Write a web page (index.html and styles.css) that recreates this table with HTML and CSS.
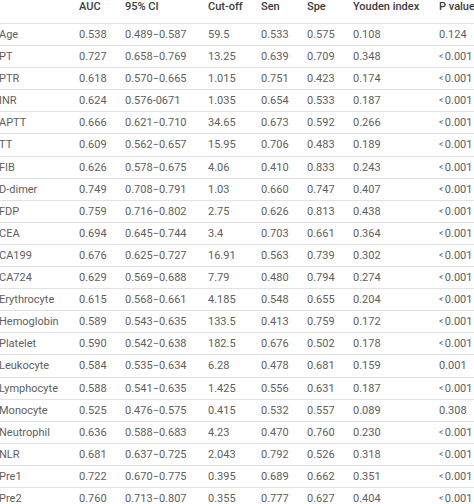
FILE: index.html
```html
<!DOCTYPE html>
<html>
<head>
<meta charset="utf-8">
<link rel="stylesheet" href="styles.css">
</head>
<body>
<div class="frame">
<div class="table">
  <div class="row head">
    <span></span><span>AUC</span><span>95% CI</span><span>Cut-off</span><span>Sen</span><span>Spe</span><span>Youden index</span><span>P value</span>
  </div>
  <div class="row"><span>Age</span><span>0.538</span><span>0.489−0.587</span><span>59.5</span><span>0.533</span><span>0.575</span><span>0.108</span><span>0.124</span></div>
  <div class="row"><span>PT</span><span>0.727</span><span>0.658−0.769</span><span>13.25</span><span>0.639</span><span>0.709</span><span>0.348</span><span><i class="lt">&lt;</i>0.001</span></div>
  <div class="row"><span>PTR</span><span>0.618</span><span>0.570−0.665</span><span>1.015</span><span>0.751</span><span>0.423</span><span>0.174</span><span><i class="lt">&lt;</i>0.001</span></div>
  <div class="row"><span>INR</span><span>0.624</span><span>0.576-0671</span><span>1.035</span><span>0.654</span><span>0.533</span><span>0.187</span><span><i class="lt">&lt;</i>0.001</span></div>
  <div class="row"><span>APTT</span><span>0.666</span><span>0.621−0.710</span><span>34.65</span><span>0.673</span><span>0.592</span><span>0.266</span><span><i class="lt">&lt;</i>0.001</span></div>
  <div class="row"><span>TT</span><span>0.609</span><span>0.562−0.657</span><span>15.95</span><span>0.706</span><span>0.483</span><span>0.189</span><span><i class="lt">&lt;</i>0.001</span></div>
  <div class="row"><span>FIB</span><span>0.626</span><span>0.578−0.675</span><span>4.06</span><span>0.410</span><span>0.833</span><span>0.243</span><span><i class="lt">&lt;</i>0.001</span></div>
  <div class="row"><span>D-dimer</span><span>0.749</span><span>0.708−0.791</span><span>1.03</span><span>0.660</span><span>0.747</span><span>0.407</span><span><i class="lt">&lt;</i>0.001</span></div>
  <div class="row"><span>FDP</span><span>0.759</span><span>0.716−0.802</span><span>2.75</span><span>0.626</span><span>0.813</span><span>0.438</span><span><i class="lt">&lt;</i>0.001</span></div>
  <div class="row"><span>CEA</span><span>0.694</span><span>0.645−0.744</span><span>3.4</span><span>0.703</span><span>0.661</span><span>0.364</span><span><i class="lt">&lt;</i>0.001</span></div>
  <div class="row"><span>CA199</span><span>0.676</span><span>0.625−0.727</span><span>16.91</span><span>0.563</span><span>0.739</span><span>0.302</span><span><i class="lt">&lt;</i>0.001</span></div>
  <div class="row"><span>CA724</span><span>0.629</span><span>0.569−0.688</span><span>7.79</span><span>0.480</span><span>0.794</span><span>0.274</span><span><i class="lt">&lt;</i>0.001</span></div>
  <div class="row"><span>Erythrocyte</span><span>0.615</span><span>0.568−0.661</span><span>4.185</span><span>0.548</span><span>0.655</span><span>0.204</span><span><i class="lt">&lt;</i>0.001</span></div>
  <div class="row"><span>Hemoglobin</span><span>0.589</span><span>0.543−0.635</span><span>133.5</span><span>0.413</span><span>0.759</span><span>0.172</span><span><i class="lt">&lt;</i>0.001</span></div>
  <div class="row"><span>Platelet</span><span>0.590</span><span>0.542−0.638</span><span>182.5</span><span>0.676</span><span>0.502</span><span>0.178</span><span><i class="lt">&lt;</i>0.001</span></div>
  <div class="row"><span>Leukocyte</span><span>0.584</span><span>0.535−0.634</span><span>6.28</span><span>0.478</span><span>0.681</span><span>0.159</span><span>0.001</span></div>
  <div class="row"><span>Lymphocyte</span><span>0.588</span><span>0.541−0.635</span><span>1.425</span><span>0.556</span><span>0.631</span><span>0.187</span><span><i class="lt">&lt;</i>0.001</span></div>
  <div class="row"><span>Monocyte</span><span>0.525</span><span>0.476−0.575</span><span>0.415</span><span>0.532</span><span>0.557</span><span>0.089</span><span>0.308</span></div>
  <div class="row"><span>Neutrophil</span><span>0.636</span><span>0.588−0.683</span><span>4.23</span><span>0.470</span><span>0.760</span><span>0.230</span><span><i class="lt">&lt;</i>0.001</span></div>
  <div class="row"><span>NLR</span><span>0.681</span><span>0.637−0.725</span><span>2.043</span><span>0.792</span><span>0.526</span><span>0.318</span><span><i class="lt">&lt;</i>0.001</span></div>
  <div class="row"><span>Pre1</span><span>0.722</span><span>0.670−0.775</span><span>0.395</span><span>0.689</span><span>0.662</span><span>0.351</span><span><i class="lt">&lt;</i>0.001</span></div>
  <div class="row"><span>Pre2</span><span>0.760</span><span>0.713−0.807</span><span>0.355</span><span>0.777</span><span>0.627</span><span>0.404</span><span><i class="lt">&lt;</i>0.001</span></div>
</div>
</div>
</body>
</html>
```

FILE: styles.css
```css
html, body {
  margin: 0;
  padding: 0;
  background: #ffffff;
  overflow: hidden;
}
body {
  width: 474px;
  height: 504px;
  font-family: Roboto, "Liberation Sans", sans-serif;
  font-size: 11px;
  color: #606060;
}
.frame {
  width: 474px;
  height: 504px;
  overflow: hidden;
}
.table {
  margin-left: -1px;
  width: 475px;
}
.row {
  display: grid;
  grid-template-columns: 80px 46px 83px 53px 46px 46px 86px 35px;
  height: 22.1px;
  line-height: 19px;
  padding-top: 1px;
  padding-bottom: 2px;
  box-sizing: border-box;
  border-top: 1px solid #e2e2e2;
  white-space: nowrap;
}
.row.head {
  height: 23px;
  line-height: 14px;
  padding-top: 0;
  padding-bottom: 0;
  border-top: none;
  color: #3c3c3c;
  font-weight: 500;
}
.lt {
  font-style: normal;
  font-size: 8.5px;
  margin-right: 1.5px;
  vertical-align: 1px;
}
```
